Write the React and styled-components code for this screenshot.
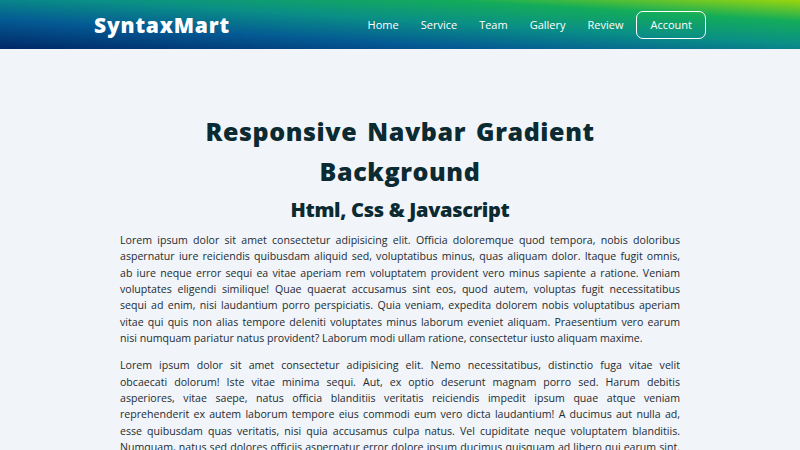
import React from "react";
import styled, { createGlobalStyle } from "styled-components";

const GlobalStyle = createGlobalStyle`
  * { box-sizing: border-box; margin: 0; padding: 0; }
  html, body { background: #f1f4f8; }
  body { font-family: "Open Sans", "Liberation Sans", sans-serif; color: #0e2a33; }
`;

const Header = styled.header`
  height: 49px;
  background: linear-gradient(to top right, #002766 0%, #045a94 30%, #0a8f86 55%, #13ac5a 78%, #9ad60c 100%);
`;

const HeaderInner = styled.div`
  width: 612px;
  height: 100%;
  margin: 0 auto;
  display: flex;
  align-items: center;
  justify-content: space-between;
`;

const Logo = styled.a`
  font-size: 21px;
  font-weight: 800;
  color: #ffffff;
  letter-spacing: 0.8px;
  text-decoration: none;
`;

const NavList = styled.nav`
  display: flex;
  align-items: center;
`;

const NavLink = styled.a`
  font-size: 11px;
  font-weight: 500;
  color: #ffffff;
  text-decoration: none;
  padding: 0 11px;
`;

const AccountButton = styled.a`
  margin-left: 2px;
  height: 28px;
  padding: 0 13px;
  display: flex;
  align-items: center;
  border: 1.5px solid #ffffff;
  border-radius: 7px;
  font-size: 11px;
  font-weight: 500;
  color: #ffffff;
  text-decoration: none;
`;

const Main = styled.main`
  width: 560px;
  margin: 0 auto;
  padding-top: 62px;
  text-align: center;
`;

const Title = styled.h1`
  font-size: 25px;
  font-weight: 800;
  line-height: 40px;
  letter-spacing: 0.6px;
  word-spacing: 3px;
  color: #0b2a31;
`;

const Subtitle = styled.h2`
  font-size: 20px;
  font-weight: 800;
  line-height: 32px;
  letter-spacing: -0.3px;
  margin-top: 3px;
  margin-bottom: 6px;
  color: #0b2a31;
`;

const Paragraph = styled.p`
  font-size: 10.6px;
  line-height: 16.35px;
  color: #1c2c33;
  margin-bottom: 11px;
`;

const Line = styled.span`
  display: block;
  text-align: justify;
  text-align-last: ${(p) => (p.$last ? "left" : "justify")};
`;

const p1 = [
  "Lorem ipsum dolor sit amet consectetur adipisicing elit. Officia doloremque quod tempora, nobis doloribus",
  "aspernatur iure reiciendis quibusdam aliquid sed, voluptatibus minus, quas aliquam dolor. Itaque fugit omnis,",
  "ab iure neque error sequi ea vitae aperiam rem voluptatem provident vero minus sapiente a ratione. Veniam",
  "voluptates eligendi similique! Quae quaerat accusamus sint eos, quod autem, voluptas fugit necessitatibus",
  "sequi ad enim, nisi laudantium porro perspiciatis. Quia veniam, expedita dolorem nobis voluptatibus aperiam",
  "vitae qui quis non alias tempore deleniti voluptates minus laborum eveniet aliquam. Praesentium vero earum",
  "nisi numquam pariatur natus provident? Laborum modi ullam ratione, consectetur iusto aliquam maxime.",
];

const p2 = [
  "Lorem ipsum dolor sit amet consectetur adipisicing elit. Nemo necessitatibus, distinctio fuga vitae velit",
  "obcaecati dolorum! Iste vitae minima sequi. Aut, ex optio deserunt magnam porro sed. Harum debitis",
  "asperiores, vitae saepe, natus officia blanditiis veritatis reiciendis impedit ipsum quae atque veniam",
  "reprehenderit ex autem laborum tempore eius commodi eum vero dicta laudantium! A ducimus aut nulla ad,",
  "esse quibusdam quas veritatis, nisi quia accusamus culpa natus. Vel cupiditate neque voluptatem blanditiis.",
  "Numquam, natus sed dolores officiis aspernatur error dolore ipsum ducimus quisquam ad libero qui earum sint.",
  "Quos, eveniet! Sint repellendus illo dolorem quidem sequi ratione.",
];

function Para({ lines }) {
  return (
    <Paragraph>
      {lines.map((l, i) => (
        <Line key={i} $last={i === lines.length - 1}>
          {l}
        </Line>
      ))}
    </Paragraph>
  );
}

export default function App() {
  return (
    <>
      <GlobalStyle />
      <Header>
        <HeaderInner>
          <Logo href="#">SyntaxMart</Logo>
          <NavList>
            <NavLink href="#">Home</NavLink>
            <NavLink href="#">Service</NavLink>
            <NavLink href="#">Team</NavLink>
            <NavLink href="#">Gallery</NavLink>
            <NavLink href="#">Review</NavLink>
            <AccountButton href="#">Account</AccountButton>
          </NavList>
        </HeaderInner>
      </Header>
      <Main>
        <Title>
          Responsive Navbar Gradient
          <br />
          Background
        </Title>
        <Subtitle>Html, Css &amp; Javascript</Subtitle>
        <Para lines={p1} />
        <Para lines={p2} />
      </Main>
    </>
  );
}
